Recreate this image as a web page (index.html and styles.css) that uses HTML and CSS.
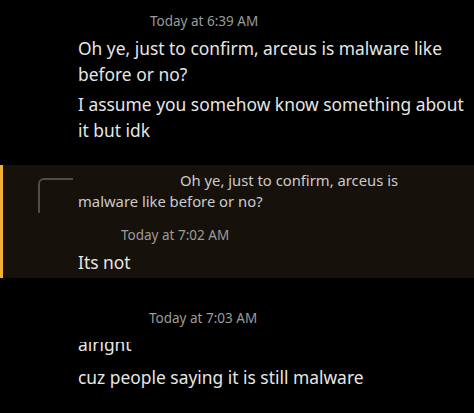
FILE: index.html
```html
<!DOCTYPE html>
<html>
<head>
    <title>Chat</title>
    <link rel="stylesheet" href="styles.css">
</head>
<body>

<div class="chat">
    <!-- first message group -->
    <div class="group first">
        <div class="stamp stamp-a">Today at 6:39 AM</div>
        <p class="msg">Oh ye, just to confirm, arceus is malware like before or no?</p>
        <p class="msg next">I assume you somehow know something about it but idk</p>
    </div>

    <!-- reply, mentioned -->
    <div class="group mention">
        <span class="reply-line"></span>
        <p class="reply-text">Oh ye, just to confirm, arceus is malware like before or no?</p>
        <div class="stamp stamp-b">Today at 7:02 AM</div>
        <p class="msg">Its not</p>
    </div>

    <!-- last group -->
    <div class="group last">
        <div class="stamp stamp-c">Today at 7:03 AM</div>
        <div class="clip"><p class="msg clipped">alright</p></div>
        <p class="msg after-clip">cuz people saying it is still malware</p>
    </div>
</div>

</body>
</html>
```

FILE: styles.css
```css
/* chat crop */
html, body {
    margin: 0;
    background: #000;
}
.chat {
    width: 474px;
    height: 413px;
    overflow: hidden;
    font-family: "Noto Sans", "Open Sans", sans-serif;
    color: #e6e6e6;
}
.group {
    padding-left: 78px;
}
.first {
    padding-top: 12px;
}
.stamp {
    font-size: 13.5px;
    line-height: 18px;
    color: #9c9c9c;
}
.stamp-a { margin-left: 72px; }
.stamp-b { margin-left: 43px; margin-top: 14px; }
.stamp-c { margin-left: 71px; margin-top: 31px; }
.msg {
    margin: 5px 0 0;
    font-size: 17.4px;
    line-height: 26px;
}
.msg.next {
    margin-top: 4px;
}
.mention {
    position: relative;
    margin-top: 22px;
    height: 113px;
    box-sizing: border-box;
    padding-top: 5px;
    background: #16110a;
    border-left: 3px solid #f0b232;
    padding-left: 75px;
}
.reply-line {
    position: absolute;
    left: 35px;
    top: 13px;
    width: 35px;
    height: 35px;
    border-left: 2px solid #4d4d4d;
    border-top: 2px solid #4d4d4d;
    border-top-left-radius: 6px;
    box-sizing: border-box;
}
.reply-text {
    margin: 0;
    font-size: 14.8px;
    line-height: 21px;
    color: #cbcbcb;
    text-indent: 102px;
    padding-right: 40px;
}
.clip {
    margin-top: 15px;
    height: 15px;
    overflow: hidden;
}
.clipped {
    margin-top: -11px;
}
.msg.after-clip {
    margin-top: 7px;
}
```
